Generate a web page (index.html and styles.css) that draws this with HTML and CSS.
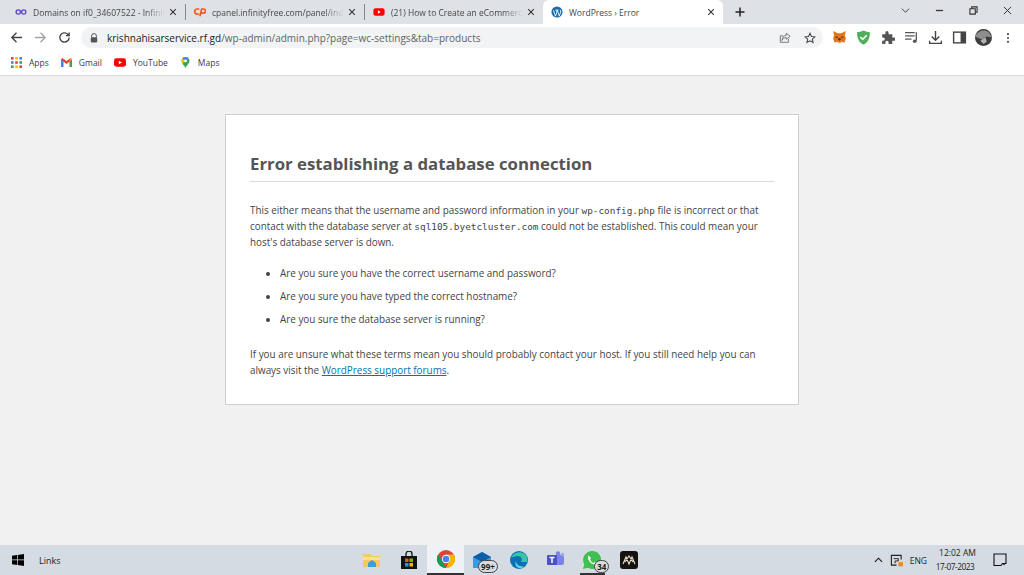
FILE: index.html
```html
<!DOCTYPE html>
<html lang="en">
<head>
<meta charset="utf-8">
<title>WordPress › Error</title>
<link rel="stylesheet" href="styles.css">
</head>
<body>
<div class="screen">
  <header class="tabstrip">
    <div class="tab">
      <svg class="fav" viewBox="0 0 14 14"><circle cx="3.800" cy="7" r="2.500" fill="none" stroke="#5b45c9" stroke-width="1.500"/><circle cx="10.200" cy="7" r="2.500" fill="none" stroke="#5b45c9" stroke-width="1.500"/></svg>
      <span class="tab-title">Domains on if0_34607522 - Infinity</span>
      <svg class="x" viewBox="0 0 10 10"><path d="M1.500 1.500l7 7M8.500 1.500l-7 7"/></svg>
    </div>
    <i class="sep"></i>
    <div class="tab">
      <svg class="fav" viewBox="0 0 14 14"><path d="M6.200 3.500H3.800a3 3 0 0 0 0 6h1.700M6.800 12L9 3.500h2a2.300 2.300 0 0 1 0 4.800H8.500" fill="none" stroke="#f05a22" stroke-width="2"/></svg>
      <span class="tab-title">cpanel.infinityfree.com/panel/indexing</span>
      <svg class="x" viewBox="0 0 10 10"><path d="M1.500 1.500l7 7M8.500 1.500l-7 7"/></svg>
    </div>
    <i class="sep"></i>
    <div class="tab">
      <svg class="fav" viewBox="0 0 14 14"><rect x="0.500" y="2.500" width="13" height="9" rx="2.500" fill="#f00"/><path d="M5.700 5v4L9 7z" fill="#fff"/></svg>
      <span class="tab-title">(21) How to Create an eCommerce Website</span>
      <svg class="x" viewBox="0 0 10 10"><path d="M1.500 1.500l7 7M8.500 1.500l-7 7"/></svg>
    </div>
    <div class="tab tab-active">
      <svg class="fav" viewBox="0 0 14 14"><circle cx="7" cy="7" r="6.500" fill="#1a6ea8"/><path d="M2.800 5l2.500 6.800 1.600-4.600-.9-2.400M5.400 4.800h3.200M7.400 4.800l2.300 7 1.500-4.700c.4-1.100.2-1.900-.3-2.700" fill="none" stroke="#fff" stroke-width="1"/></svg>
      <span class="tab-title">WordPress › Error</span>
      <svg class="x" viewBox="0 0 10 10"><path d="M1.500 1.500l7 7M8.500 1.500l-7 7"/></svg>
    </div>
    <svg class="newtab" viewBox="0 0 10 10"><path d="M5 .5v9M.5 5h9"/></svg>
    <div class="window-controls">
      <svg class="wc" viewBox="0 0 10 10"><path d="M1 3l4 4 4-4"/></svg>
      <svg class="wc" viewBox="0 0 10 10"><path d="M1 5h8" stroke-width="1.400"/></svg>
      <svg class="wc" viewBox="0 0 10 10"><path d="M1 3h6v6H1zM3 3V1h6v6H7" stroke-width="1.200"/></svg>
      <svg class="wc" viewBox="0 0 10 10"><path d="M1 1l8 8M9 1l-8 8" stroke-width="1.100"/></svg>
    </div>
  </header>

  <nav class="toolbar">
    <svg class="nav" viewBox="0 0 14 14"><path d="M13 7H2M7 2L2 7l5 5" stroke="#444"/></svg>
    <svg class="nav" viewBox="0 0 14 14"><path d="M1 7h11M7 2l5 5-5 5" stroke="#a4a4a4"/></svg>
    <svg class="nav" viewBox="0 0 14 14"><path d="M12 7a5 5 0 1 1-1.500-3.600L12 5M12 1.500V5H8.500" stroke="#444"/></svg>
    <div class="omnibox">
      <svg class="lock" viewBox="0 0 10 12"><path d="M2 5V3.500a3 3 0 0 1 6 0V5" fill="none" stroke="#555" stroke-width="1.200"/><rect x="1" y="5" width="8" height="6.500" rx="1" fill="#555"/></svg>
      <span class="url"><b>krishnahisarservice.rf.gd</b>/wp-admin/admin.php?page=wc-settings&amp;tab=products</span>
      <svg class="omni-icon" viewBox="0 0 14 14"><path d="M11 8v4H1.500V4.500H5M8.500 1.500L13 5 8.500 8.500V6.500C6 6.500 4.500 7.500 3.500 10 3.800 6.500 5.500 4 8.500 3.800z" fill="none" stroke="#666"/></svg>
      <svg class="omni-icon" viewBox="0 0 14 14"><path d="M7 1.500l1.700 3.700 4 .4-3 2.700.9 4L7 10.300l-3.600 2 .9-4-3-2.700 4-.4z" fill="none" stroke="#444" stroke-width="1.200"/></svg>
    </div>
    <div class="extensions">
      <svg class="ext" viewBox="0 0 14 14"><path d="M1 1l4.500 2h3L13 1l-1 4 1 3-1.500 4-2.500-1-1 1H6l-1-1-2.500 1L1 8l1-3z" fill="#e2761b"/><path d="M5.500 8.500L7 10l1.500-1.500L7 7.500z" fill="#3a2a1e"/><path d="M3.500 6.500L5.500 7M10.500 6.500L8.500 7" stroke="#40311f"/></svg>
      <svg class="ext" viewBox="0 0 14 14"><path d="M7 .5c2 1 4 1.500 6 1.500 0 5-1.500 9.500-6 11.500C2.500 11.500 1 7 1 2c2 0 4-.5 6-1.500z" fill="#4fae5b"/><path d="M4 6.500l2.200 2.200L10 5" fill="none" stroke="#fff" stroke-width="1.400"/></svg>
      <svg class="ext" viewBox="0 0 14 14"><path d="M2 4h3V2.500a1.500 1.500 0 0 1 3 0V4h3.500v3H13a1.500 1.500 0 0 1 0 3h-1.500v3H8V11.500a1.500 1.500 0 0 0-3 0V13H2V10h1a1.500 1.500 0 0 0 0-3H2z" fill="#555"/></svg>
      <svg class="ext" viewBox="0 0 14 14"><path d="M1 2.500h9M1 5.500h9M1 8.500h6" stroke="#555" fill="none" stroke-width="1.200"/><path d="M11.500 2v8" stroke="#555" stroke-width="1.200"/><circle cx="10" cy="10.500" r="1.700" fill="#555"/></svg>
      <svg class="ext" viewBox="0 0 14 14"><path d="M7 1v8M3.500 6L7 9.500 10.500 6M1.500 10v2.500h11V10" stroke="#444" fill="none" stroke-width="1.300"/></svg>
      <svg class="ext" viewBox="0 0 14 14"><rect x="1.500" y="2" width="11" height="10" fill="none" stroke="#444" stroke-width="1.300"/><rect x="8" y="2" width="4.500" height="10" fill="#444"/></svg>
      <svg class="avatar" viewBox="0 0 16 16"><circle cx="8" cy="8" r="8" fill="#3c3c3c"/><path d="M0 7c3-6 9-7 13-4l3 5-5-1-4 3z" fill="#8d8d90"/><path d="M5 11l5-3 1 4-3 2z" fill="#b8b0b0"/></svg>
      <svg class="kebab" viewBox="0 0 4 14"><circle cx="2" cy="2.500" r="1.200"/><circle cx="2" cy="7" r="1.200"/><circle cx="2" cy="11.500" r="1.200"/></svg>
    </div>
  </nav>

  <div class="bookmarks">
    <span class="bm">
      <svg class="bm-icon" viewBox="0 0 11 11"><g><rect x="0" y="0" width="2.600" height="2.600" fill="#ea4335"/><rect x="4.200" y="0" width="2.600" height="2.600" fill="#fbbc05"/><rect x="8.400" y="0" width="2.600" height="2.600" fill="#4285f4"/><rect x="0" y="4.200" width="2.600" height="2.600" fill="#4285f4"/><rect x="4.200" y="4.200" width="2.600" height="2.600" fill="#ea4335"/><rect x="8.400" y="4.200" width="2.600" height="2.600" fill="#34a853"/><rect x="0" y="8.400" width="2.600" height="2.600" fill="#34a853"/><rect x="4.200" y="8.400" width="2.600" height="2.600" fill="#fbbc05"/><rect x="8.400" y="8.400" width="2.600" height="2.600" fill="#ea4335"/></g></svg>
      Apps
    </span>
    <span class="bm">
      <svg class="bm-icon" viewBox="0 0 12 10"><path d="M0 1.500V10h2.500V4L6 6.500 9.500 4v6H12V1.500L10.500 0 6 3.300 1.500 0z" fill="#ea4335"/><path d="M0 1.500V10h2.500V3.500z" fill="#4285f4"/><path d="M9.500 3.500V10H12V1.500z" fill="#34a853"/><path d="M10.500 0L12 1.500 9.500 4V2z" fill="#fbbc05"/></svg>
      Gmail
    </span>
    <span class="bm">
      <svg class="bm-icon bm-wide" viewBox="0 0 13 10"><rect y="0.500" width="13" height="9" rx="2.500" fill="#f00"/><path d="M5.200 3v4l3.400-2z" fill="#fff"/></svg>
      YouTube
    </span>
    <span class="bm">
      <svg class="bm-icon" viewBox="0 0 10 14"><path d="M5 0a5 5 0 0 0-5 5c0 3.500 3.500 5 5 9 1.500-4 5-5.500 5-9a5 5 0 0 0-5-5z" fill="#34a853"/><path d="M5 0a5 5 0 0 1 3.800 1.800L1.200 8.200C.5 7.300 0 6.300 0 5a5 5 0 0 1 5-5z" fill="#fbbc05"/><path d="M1.200 1.800A5 5 0 0 1 5 0a5 5 0 0 1 3.800 1.800L5 5z" fill="#4285f4"/><circle cx="5" cy="5" r="1.800" fill="#fff"/></svg>
      Maps
    </span>
  </div>

  <main class="page">
    <article class="card">
      <h1>Error establishing a database connection</h1>
      <p>This either means that the username and password information in your <code>wp-config.php</code> file is incorrect or that contact with the database server at <code>sql105.byetcluster.com</code> could not be established. This could mean your host's database server is down.</p>
      <ul>
        <li>Are you sure you have the correct username and password?</li>
        <li>Are you sure you have typed the correct hostname?</li>
        <li>Are you sure the database server is running?</li>
      </ul>
      <p>If you are unsure what these terms mean you should probably contact your host. If you still need help you can always visit the <a href="#">WordPress support forums</a>.</p>
    </article>
  </main>

  <footer class="taskbar">
    <svg class="win" viewBox="0 0 12 12"><path d="M0 1.700L5 1v4.600H0zM5.700.9L12 0v5.600H5.700zM0 6.300h5V11l-5-.7zM5.700 6.300H12V12l-6.300-.9z" fill="#000"/></svg>
    <span class="links">Links</span>
    <div class="apps">
      <span class="app"><svg class="app-icon" viewBox="0 0 18 16"><path d="M0 2h7l2 2h8v11H0z" fill="#f4c95d"/><path d="M0 5h17v3H0z" fill="#fbe08f"/><path d="M5 15v-4l4-3 4 3v4z" fill="#3d9be0"/></svg></span>
      <span class="app"><svg class="app-icon" viewBox="0 0 18 18"><path d="M6 5V3a3 3 0 0 1 6 0v2" fill="none" stroke="#111" stroke-width="1.300"/><rect x="1" y="5" width="16" height="13" fill="#111"/><rect x="5" y="7.500" width="3.500" height="3.500" fill="#f25022"/><rect x="9.500" y="7.500" width="3.500" height="3.500" fill="#7fba00"/><rect x="5" y="12" width="3.500" height="3.500" fill="#00a4ef"/><rect x="9.500" y="12" width="3.500" height="3.500" fill="#ffb900"/></svg></span>
      <span class="app app-active"><svg class="app-icon" viewBox="0 0 18 18"><circle cx="9" cy="9" r="9" fill="#db4437"/><path d="M9 18a9 9 0 0 1-7.800-13.500L5.500 12 9 18z" fill="#0f9d58"/><path d="M9 18a9 9 0 0 0 7.800-13.500H9l3.500 6z" fill="#f4b400"/><circle cx="9" cy="9" r="4.200" fill="#fff"/><circle cx="9" cy="9" r="3.300" fill="#4285f4"/></svg></span>
      <span class="app"><svg class="app-icon" viewBox="0 0 18 16"><path d="M0 5l9-5 9 5v11H0z" fill="#3a9ae2"/><path d="M0 5l9 5 9-5-9-5z" fill="#0e5fa8"/></svg><span class="badge badge-mail">99+</span></span>
      <span class="app"><svg class="app-icon" viewBox="0 0 18 18"><circle cx="9" cy="9" r="9" fill="#0c6fb8"/><path d="M1 7c2-5 8-7 12-5s5 6 4 9h-6c2-3 0-6-3-6S2 6 1 7z" fill="#36c6a5"/><path d="M6 10c0 4 4 6 8 5l-2 2c-5 1-8-3-6-7z" fill="#5fd6e8"/></svg></span>
      <span class="app"><svg class="app-icon" viewBox="0 0 18 18"><rect x="7" y="4" width="10" height="10" rx="2" fill="#7b83eb"/><circle cx="11" cy="2.500" r="2.200" fill="#7b83eb"/><circle cx="15.500" cy="3.500" r="1.700" fill="#9ea4f0"/><rect x="0" y="4" width="10" height="10" rx="1" fill="#4b53bc"/><path d="M2.500 6.500h5M5 6.500v5.500" stroke="#fff" stroke-width="1.500"/></svg></span>
      <span class="app app-running"><svg class="app-icon" viewBox="0 0 18 18"><path d="M9 0a9 9 0 0 0-7.700 13.500L0 18l4.700-1.200A9 9 0 1 0 9 0z" fill="#3fc051"/><path d="M5.500 4.500c-1.500 2 0 5 2 7s5 3 6.500 1.500l-2-2-1.500 1c-1.500-.5-3-2-3.500-3.500l1-1.500z" fill="#fff"/></svg><span class="badge badge-wa">34</span></span>
      <span class="app"><svg class="app-icon" viewBox="0 0 18 18"><rect width="18" height="18" rx="3" fill="#15130f"/><path d="M3 13l3-7 3 7 3-7 3 7M5 11l4-6 4 6" fill="none" stroke="#eadccb" stroke-width="1.100"/></svg></span>
    </div>
    <div class="tray">
      <svg class="tray-caret" viewBox="0 0 10 6"><path d="M1 5l4-4 4 4"/></svg>
      <span class="tray-net"><svg viewBox="0 0 14 14"><path d="M12 6V1.500H1.500V12H7" fill="none" stroke="#222" stroke-width="1.200"/><path d="M4 5h5v2.500H5.500V10" fill="none" stroke="#222"/><rect x="9" y="8.500" width="5" height="5" rx="1" fill="#f28c1e"/></svg></span>
      <span class="lang">ENG</span>
      <span class="clock"><span class="time">12:02 AM</span><span class="date">17-07-2023</span></span>
      <svg class="notif" viewBox="0 0 14 14"><path d="M1 1h12v9.500H9.500L8 12.500H1z" fill="none" stroke="#111" stroke-width="1.100"/><circle cx="11" cy="11.500" r=".8" fill="#111"/></svg>
    </div>
  </footer>
</div>
</body>
</html>
```
FILE: styles.css
```css
* { box-sizing: border-box; }
html, body { margin: 0; padding: 0; height: 100%; overflow: hidden; }
body { font-family: "Open Sans", "Noto Sans", "Liberation Sans", sans-serif; color: #444; }
.screen { width: 1024px; height: 575px; display: flex; flex-direction: column; background: #f1f1f1; }

.tabstrip { height: 24px; flex: none; background: #dee1e6; display: flex; align-items: center; padding-left: 7px; }
.tab { width: 178px; height: 24px; flex: none; display: flex; align-items: center; padding: 0 8px; font-size: 8.500px; color: #45474a; }
.tab-active { width: 180px; background: #fff; border-radius: 6px 6px 0 0; }
.tab-title { flex: 1; min-width: 0; margin: 0 4px 0 6px; white-space: nowrap; overflow: hidden; -webkit-mask-image: linear-gradient(to right, #000 85%, transparent); mask-image: linear-gradient(to right, #000 85%, transparent); }
.tab-active .tab-title { -webkit-mask-image: none; mask-image: none; }
.fav { width: 12px; height: 12px; flex: none; }
.x { width: 8px; height: 8px; flex: none; fill: none; stroke: #333; stroke-width: 1.300; }
.sep { width: 1px; height: 16px; background: #85888c; flex: none; }
.newtab { width: 10px; height: 10px; margin-left: 12px; fill: none; stroke: #222; stroke-width: 1.500; flex: none; }
.window-controls { margin: -4px 0 0 auto; display: flex; align-items: center; gap: 25px; padding-right: 12px; }
.wc { width: 9px; height: 9px; fill: none; stroke: #333; stroke-width: 1; }

.toolbar { height: 26px; flex: none; background: #fff; display: flex; align-items: center; padding: 1px 0 0 10px; }
.nav { width: 13px; height: 13px; margin-right: 11px; fill: none; stroke-width: 1.500; flex: none; }
.omnibox { width: 742px; height: 21px; margin-left: -1px; background: #f1f3f4; border-radius: 11px; display: flex; align-items: center; padding: 0 7px 0 9px; font-size: 10px; color: #5f6368; flex: none; }
.lock { width: 8px; height: 10px; flex: none; }
.url { margin-left: 9px; flex: 1; white-space: nowrap; }
.url b { font-weight: 400; color: #202124; }
.omni-icon { width: 12px; height: 12px; margin-left: 13px; flex: none; }
.extensions { display: flex; align-items: center; padding-left: 9px; flex: 1; }
.ext { width: 15px; height: 15px; margin-right: 9px; flex: none; }
.avatar { width: 17px; height: 17px; flex: none; margin-left: -1px; }
.kebab { width: 4px; height: 12px; margin-left: 14px; fill: #444; flex: none; }

.bookmarks { height: 26px; flex: none; background: #fff; border-bottom: 1px solid #dadce0; display: flex; align-items: center; padding-left: 11px; font-size: 8.500px; color: #3c4043; }
.bm { display: flex; align-items: center; gap: 7px; margin-right: 12px; }
.bm-icon { width: 11px; height: 11px; flex: none; }
.bm-wide { width: 12px; }

.page { flex: 1; min-height: 0; padding-top: 38px; display: flex; justify-content: center; align-items: flex-start; }
.card { width: 574px; height: 291px; background: #fff; border: 1px solid #ccd0d4; padding: 24px 24px 0; font-size: 9.900px; line-height: 16px; color: #444; }
.card h1 { margin: 13px 0 0; padding-bottom: 5px; border-bottom: 1px solid #dadada; font-size: 16.800px; line-height: 24px; font-weight: 700; color: #555; }
.card p { margin: 20px 0 0; }
.card code { font-family: "DejaVu Sans Mono", "Liberation Mono", monospace; font-size: 9.400px; line-height: 1; }
.card ul { margin: 15px 0 0; padding-left: 30px; }
.card li { margin-bottom: 7px; }
.card ul + p { margin-top: 19px; }
.card a { color: #0073aa; }

.taskbar { height: 30px; flex: none; background: #d5dbe3; display: flex; align-items: center; padding-left: 12px; position: relative; }
.win { width: 12px; height: 12px; flex: none; }
.links { margin-left: 15px; font-size: 9px; color: #222; }
.apps { position: absolute; left: 354px; top: 0; height: 30px; display: flex; }
.app { width: 36.700px; height: 30px; display: flex; align-items: center; justify-content: center; position: relative; }
.app-active { background: #eef1f5; border-bottom: 2px solid #333; }
.app-running::after { content: ""; position: absolute; left: 6px; right: 6px; bottom: 0; height: 2px; background: #333; }
.app-icon { width: 18px; height: 18px; }
.badge { position: absolute; left: 14px; top: 15px; height: 13px; min-width: 15px; padding: 0 2px; border-radius: 7px; background: #d8dce2; border: 1px solid #444; font-size: 8px; font-weight: 700; line-height: 11px; color: #222; text-align: center; }
.badge-wa { left: 20px; }
.tray { margin-left: auto; display: flex; align-items: center; color: #222; }
.tray-caret { width: 9px; height: 6px; fill: none; stroke: #111; stroke-width: 1.200; }
.tray-net { width: 13px; height: 13px; margin-left: 7px; display: flex; }
.lang { margin-left: 7px; font-size: 8.500px; }
.clock { width: 50px; margin-left: 3px; display: flex; flex-direction: column; align-items: center; font-size: 8.500px; line-height: 14px; }
.time { padding-left: 5px; }
.date { font-size: 8.300px; letter-spacing: -.5px; }
.notif { width: 14px; height: 14px; margin: 0 17px 0 13px; }
```
